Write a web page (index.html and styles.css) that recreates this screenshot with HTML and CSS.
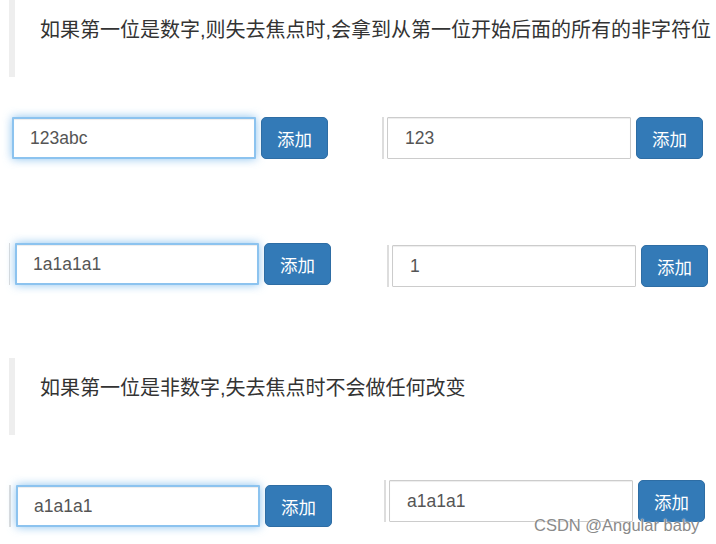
FILE: index.html
```html
<!DOCTYPE html>
<html lang="zh">
  <head>
    <meta charset="UTF-8" />
    <meta name="viewport" content="width=device-width, initial-scale=1.0" />
    <title>失去焦点</title>
    <link rel="stylesheet" href="styles.css">
  </head>
  <body>
    <!-- 第一位是数字 -->
    <blockquote class="note">
      <p>如果第一位是数字,则失去焦点时,会拿到从第一位开始后面的所有的非字符位</p>
    </blockquote>

    <div class="row row-1">
      <div class="field field-left">
        <input class="text-input is-focus" type="text" value="123abc" />
        <button class="btn-add">添加</button>
      </div>
      <div class="field field-right">
        <span class="edge"></span>
        <input class="text-input" type="text" value="123" />
        <button class="btn-add">添加</button>
      </div>
    </div>

    <div class="row row-2">
      <div class="field field-left">
        <span class="edge"></span>
        <input class="text-input is-focus" type="text" value="1a1a1a1" />
        <button class="btn-add">添加</button>
      </div>
      <div class="field field-right">
        <span class="edge"></span>
        <input class="text-input" type="text" value="1" />
        <button class="btn-add">添加</button>
      </div>
    </div>

    <!-- 第一位是非数字 -->
    <blockquote class="note note-2">
      <p>如果第一位是非数字,失去焦点时不会做任何改变</p>
    </blockquote>

    <div class="row row-3">
      <div class="field field-left">
        <span class="edge"></span>
        <input class="text-input is-focus" type="text" value="a1a1a1" />
        <button class="btn-add">添加</button>
      </div>
      <div class="field field-right">
        <span class="edge"></span>
        <input class="text-input" type="text" value="a1a1a1" />
        <button class="btn-add">添加</button>
      </div>
    </div>

    <div class="watermark">CSDN @Angular baby</div>
  </body>
</html>
```

FILE: styles.css
```css
html {
  height: 100%;
  overflow: hidden;
}

body {
  margin: 0;
  padding: 0;
  position: relative;
  min-height: 544px;
  background-color: #fff;
  font-family: "Liberation Sans", "Noto Sans CJK SC", sans-serif;
}

.note {
  margin: 0 0 0 9px;
  height: 77px;
  box-sizing: border-box;
  padding: 15px 0 0 25px;
  border-left: 6px solid #eee;
  color: #333;
  font-size: 20px;
  line-height: 30px;
  white-space: nowrap;
}

.note p {
  margin: 0;
}

.note-2 {
  margin-top: 71px;
}

.row {
  display: flex;
  align-items: flex-start;
}

.field {
  display: flex;
  align-items: stretch;
  height: 42px;
}

.edge {
  width: 2px;
  margin-right: 3px;
  background-color: #ddd;
}

.text-input {
  width: 244px;
  height: 42px;
  box-sizing: border-box;
  margin: 0;
  padding: 0 17px;
  border: 1px solid #ccc;
  border-radius: 1px;
  color: #555;
  font-family: "Liberation Sans", sans-serif;
  font-size: 17.5px;
  outline: none;
  box-shadow: inset 0 1px 1px rgba(0, 0, 0, 0.075);
}

.text-input.is-focus {
  border: 2px solid #8cc3ef;
  padding: 0 16px;
  box-shadow: inset 0 1px 1px rgba(0, 0, 0, 0.075), 0 0 10px rgba(102, 175, 233, 0.75);
}

.btn-add {
  width: 67px;
  height: 42px;
  margin-left: 5px;
  padding: 0;
  border: 1px solid #2e6da4;
  border-radius: 5px;
  background-color: #337ab7;
  color: #fff;
  font-family: "Noto Sans CJK SC", sans-serif;
  font-size: 17.5px;
  cursor: pointer;
}

/* 第一行 */
.row-1 {
  margin-top: 40px;
}

.row-1 .field-left {
  padding-left: 12px;
}

.row-1 .field-right {
  margin-left: 54px;
}

/* 第二行 */
.row-2 {
  margin-top: 84px;
}

.row-2 .field-left {
  padding-left: 9px;
}

.row-2 .field-left .edge {
  width: 1px;
  margin-right: 5px;
}

.row-2 .field-right {
  margin-top: 2px;
  margin-left: 56px;
}

/* 第三行 */
.row-3 {
  margin-top: 45px;
}

.row-3 .field-left {
  margin-top: 5px;
  padding-left: 9px;
}

.row-3 .field-left .edge {
  margin-right: 5px;
}

.row-3 .field-right {
  margin-left: 52px;
}

.watermark {
  position: absolute;
  top: 514px;
  left: 534px;
  color: #8a8a8a;
  font-family: "Liberation Sans", sans-serif;
  font-size: 16.5px;
  line-height: 22px;
  text-shadow: 0 0 1px #fff, 0 0 2px #fff;
  white-space: nowrap;
}
```
